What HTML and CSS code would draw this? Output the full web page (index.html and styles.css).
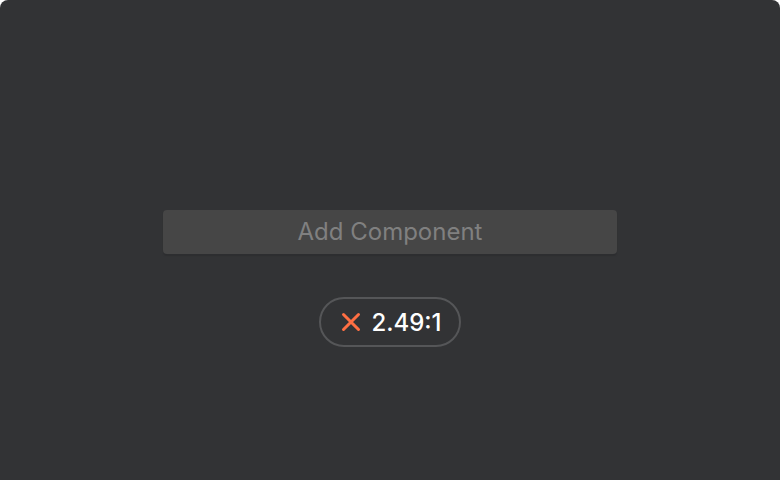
FILE: index.html
```html
<!DOCTYPE html>
<html lang="en">
<head>
<meta charset="utf-8">
<title>Contrast check</title>
<link rel="stylesheet" href="styles.css">
</head>
<body>
<main class="panel">
  <button class="add" type="button">Add Component</button>
  <div class="ratio">
    <svg class="cross" viewBox="0 0 20 20" aria-hidden="true"><path d="M2.5 2.5 17.5 17.5M17.5 2.5 2.5 17.5"/></svg>
    <span>2.49:1</span>
  </div>
</main>
</body>
</html>
```
FILE: styles.css
```css
* {
  box-sizing: border-box;
}

body {
  margin: 0;
  background: #fff;
  font-family: Inter, sans-serif;
}

.panel {
  display: flex;
  flex-direction: column;
  align-items: center;
  gap: 43px;
  min-height: 100vh;
  padding: 210px 24px 48px;
  border-radius: 8px 8px 0 0;
  background: #323335;
}

.add {
  width: 100%;
  max-width: 454px;
  height: 44px;
  padding: 0;
  border: 0;
  border-radius: 4px;
  background: #464646;
  box-shadow: 0 2px 1px #2d2e30;
  color: #808080;
  font: 400 24px/44px Inter, sans-serif;
}

.ratio {
  display: flex;
  align-items: center;
  gap: 10px;
  height: 50px;
  padding: 0 17px 0 20px;
  border: 2px solid #555658;
  border-radius: 25px;
  color: #fff;
  font-size: 24px;
  font-weight: 500;
}

.cross {
  width: 20px;
  height: 20px;
  fill: none;
  stroke: #ff6f43;
  stroke-width: 3;
  stroke-linecap: round;
}
```
